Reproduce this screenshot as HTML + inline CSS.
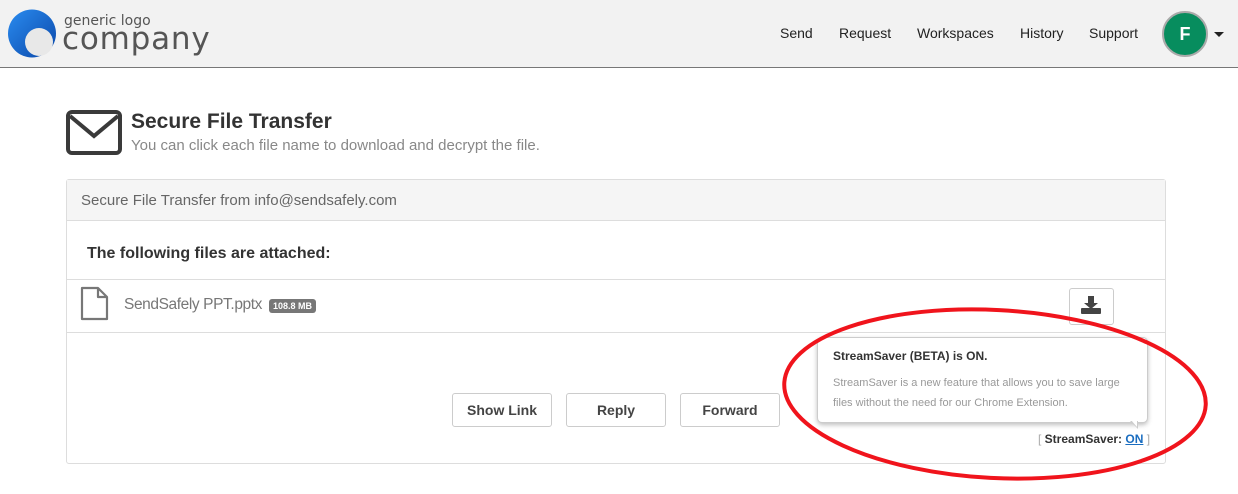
<!DOCTYPE html>
<html><head><style>
body{margin:0;width:1238px;height:494px;background:#fff;font-family:"Liberation Sans",sans-serif;position:relative;overflow:hidden;color:#333}
.hdr{position:absolute;left:0;top:0;width:1238px;height:67px;background:#f2f2f2;border-bottom:1px solid #777}
.nav{position:absolute;top:25px;font-size:14px;color:#222}
.a{position:absolute}
.btn{position:absolute;top:393px;height:32px;border:1px solid #ccc;border-radius:3px;background:#fff;font-size:14px;font-weight:bold;color:#444;text-align:center;line-height:32px}
</style></head><body>
<div class="hdr">
<svg class="a" style="left:8px;top:9px" width="50" height="50"><defs><linearGradient id="g" x1="0" y1="0" x2="1" y2="1"><stop offset="0" stop-color="#2a8cf0"/><stop offset="1" stop-color="#0a46a8"/></linearGradient></defs><circle cx="24" cy="24.5" r="24" fill="url(#g)"/><circle cx="31" cy="33" r="14" fill="#e8e8e8"/></svg>
<div class="a" style="left:64px;top:13px;font-family:'DejaVu Sans',sans-serif;font-size:14px;color:#555">generic logo</div>
<div class="a" style="left:62px;top:21px;font-family:'DejaVu Sans',sans-serif;font-size:31px;color:#555;letter-spacing:0.8px">company</div>
<div class="nav" style="left:780px">Send</div>
<div class="nav" style="left:839px">Request</div>
<div class="nav" style="left:917px">Workspaces</div>
<div class="nav" style="left:1020px">History</div>
<div class="nav" style="left:1089px">Support</div>
<div class="a" style="left:1162px;top:11px;width:42px;height:42px;border-radius:50%;background:#078d5e;border:2px solid #aaa;color:#fff;font-weight:bold;font-size:18px;text-align:center;line-height:42px">F</div>
<div class="a" style="left:1214px;top:32px;border-left:5px solid transparent;border-right:5px solid transparent;border-top:5px solid #222"></div>
</div>
<svg class="a" style="left:66px;top:110px" width="56" height="45"><rect x="2" y="2" width="52" height="41" rx="4" fill="none" stroke="#3a3a3a" stroke-width="4"/><path d="M4 6 L28 26 L52 6" fill="none" stroke="#3a3a3a" stroke-width="4"/></svg>
<div class="a" style="left:131px;top:110px;font-size:21px;font-weight:bold;color:#333">Secure File Transfer</div>
<div class="a" style="left:131px;top:137px;font-size:15px;color:#888">You can click each file name to download and decrypt the file.</div>
<div class="a" style="left:66px;top:179px;width:1098px;height:283px;border:1px solid #ddd;border-radius:3px"></div>
<div class="a" style="left:67px;top:180px;width:1098px;height:40px;background:#f5f5f5;border-bottom:1px solid #ddd"></div>
<div class="a" style="left:81px;top:192px;font-size:15px;color:#666">Secure File Transfer from info@sendsafely.com</div>
<div class="a" style="left:87px;top:245px;font-size:16px;font-weight:bold;color:#333">The following files are attached:</div>
<div class="a" style="left:67px;top:279px;width:1098px;border-top:1px solid #ddd"></div>
<div class="a" style="left:67px;top:332px;width:1098px;border-top:1px solid #ddd"></div>
<svg class="a" style="left:80px;top:286px" width="30" height="36"><path d="M2 2 H18 L27 11 V33 H2 Z M18 2 V11 H27" fill="none" stroke="#777" stroke-width="2.2" stroke-linejoin="round"/></svg>
<div class="a" style="left:124px;top:296px;font-size:15.5px;color:#777;letter-spacing:-0.4px">SendSafely PPT.pptx</div>
<div class="a" style="left:269px;top:299px;background:#777;color:#fff;font-size:9px;font-weight:bold;padding:2px 4px;border-radius:3px">108.8 MB</div>
<div class="a" style="left:1069px;top:288px;width:43px;height:35px;border:1px solid #ccc;border-radius:3px;background:#fff"></div>
<svg class="a" style="left:1080px;top:295px" width="22" height="20"><path d="M8 1 H14 V8 H18 L11 14 L4 8 H8 Z" fill="#444"/><rect x="1" y="13" width="20" height="6" rx="1" fill="#444"/></svg>
<div class="btn" style="left:452px;width:98px">Show Link</div>
<div class="btn" style="left:566px;width:98px">Reply</div>
<div class="btn" style="left:680px;width:98px">Forward</div>
<div class="a" style="left:817px;top:337px;width:329px;height:84px;border:1px solid #ccc;border-radius:5px;background:#fff;box-shadow:0 2px 5px rgba(0,0,0,.25)"></div>
<div class="a" style="left:1130px;top:421px;width:0;height:0;border-left:8px solid transparent;border-top:8px solid #ccc"></div>
<div class="a" style="left:1131px;top:420px;width:0;height:0;border-left:6px solid transparent;border-top:7px solid #fff"></div>
<div class="a" style="left:833px;top:349px;font-size:12px;font-weight:bold;color:#333">StreamSaver (BETA) is ON.</div>
<div class="a" style="left:833px;top:373px;font-size:11px;color:#999;line-height:20px;width:300px">StreamSaver is a new feature that allows you to save large files without the need for our Chrome Extension.</div>
<div class="a" style="left:1038px;top:432px;font-size:12px;color:#aaa">[ <b style="color:#333">StreamSaver: <span style="color:#1a6dc0;text-decoration:underline">ON</span></b> ]</div>
<svg class="a" style="left:0;top:0" width="1238" height="494"><ellipse cx="995" cy="394" rx="211" ry="84" transform="rotate(3 995 394)" fill="none" stroke="#f0141c" stroke-width="4"/></svg>
</body></html>
